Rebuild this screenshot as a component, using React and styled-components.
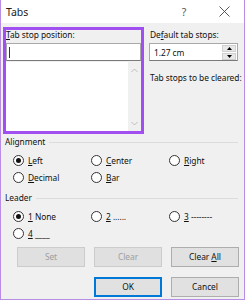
import React from 'react';
import styled, { createGlobalStyle } from 'styled-components';

const GlobalStyle = createGlobalStyle`
  html, body {
    margin: 0;
    padding: 0;
    background: #ffffff;
  }
  * {
    box-sizing: border-box;
  }
`;

const Tabs = () => {
  return (
    <>
      <GlobalStyle />
      <Window>
        <TitleBar>
          <Title>Tabs</Title>
          <TitleButtons>
            <Help>?</Help>
            <CloseIcon width="11" height="11" viewBox="0 0 11 11">
              <path d="M0.5 0.5 L10.5 10.5 M10.5 0.5 L0.5 10.5" stroke="#444" strokeWidth="0.9" />
            </CloseIcon>
          </TitleButtons>
        </TitleBar>

        <Body>
          <TopRow>
            <Highlight>
              <FieldLabel>
                <u>T</u>ab stop position:
              </FieldLabel>
              <TextBox>
                <Caret />
              </TextBox>
              <ListBox>
                <ListScroll>
                  <svg width="7" height="5" viewBox="0 0 7 5">
                    <path d="M0.5 4 L3.5 1 L6.5 4" fill="none" stroke="#bdbdbd" strokeWidth="1" />
                  </svg>
                  <svg width="7" height="5" viewBox="0 0 7 5">
                    <path d="M0.5 1 L3.5 4 L6.5 1" fill="none" stroke="#bdbdbd" strokeWidth="1" />
                  </svg>
                </ListScroll>
              </ListBox>
            </Highlight>

            <RightColumn>
              <FieldLabel>
                De<u>f</u>ault tab stops:
              </FieldLabel>
              <TextBox>
                <Value>1.27 cm</Value>
                <Spinner>
                  <SpinButton>
                    <svg width="5" height="3" viewBox="0 0 5 3">
                      <path d="M0 3 L2.5 0 L5 3 Z" fill="#000" />
                    </svg>
                  </SpinButton>
                  <SpinButton>
                    <svg width="5" height="3" viewBox="0 0 5 3">
                      <path d="M0 0 L2.5 3 L5 0 Z" fill="#000" />
                    </svg>
                  </SpinButton>
                </Spinner>
              </TextBox>
              <ClearedLabel>Tab stops to be cleared:</ClearedLabel>
            </RightColumn>
          </TopRow>

          <GroupLabel>
            <span>Alignment</span>
          </GroupLabel>
          <RadioGrid>
            <Radio>
              <Circle $checked />
              <span><u>L</u>eft</span>
            </Radio>
            <Radio>
              <Circle />
              <span><u>C</u>enter</span>
            </Radio>
            <Radio>
              <Circle />
              <span><u>R</u>ight</span>
            </Radio>
            <Radio>
              <Circle />
              <span><u>D</u>ecimal</span>
            </Radio>
            <Radio>
              <Circle />
              <span><u>B</u>ar</span>
            </Radio>
          </RadioGrid>

          <GroupLabel $top="6px">
            <span>Leader</span>
          </GroupLabel>
          <RadioGrid>
            <Radio>
              <Circle $checked />
              <span><u>1</u> None</span>
            </Radio>
            <Radio>
              <Circle />
              <span><u>2</u> ......</span>
            </Radio>
            <Radio>
              <Circle />
              <span><u>3</u> --------</span>
            </Radio>
            <Radio>
              <Circle />
              <span><u>4</u> ____</span>
            </Radio>
          </RadioGrid>

          <ButtonRow $top="5px">
            <Button $disabled>Set</Button>
            <Button $disabled>Clear</Button>
            <Button>
              Clear <u>A</u>ll
            </Button>
          </ButtonRow>
          <ButtonRow $top="10px">
            <Button $default>OK</Button>
            <Button>Cancel</Button>
          </ButtonRow>
        </Body>
      </Window>
    </>
  );
};

export default Tabs;

const Window = styled.div`
  width: 245px;
  height: 300px;
  display: flex;
  flex-direction: column;
  border: 1px solid #b88de6;
  border-top: none;
  background: #f0f0f0;
  font-family: 'Noto Sans', 'Open Sans', sans-serif;
  font-size: 8.4px;
  letter-spacing: -0.05px;
  color: #111;
  overflow: hidden;
`;

const TitleBar = styled.div`
  height: 23px;
  display: flex;
  align-items: center;
  justify-content: space-between;
  padding: 0 0 0 5px;
  background: #ffffff;
`;

const Title = styled.div`
  font-size: 10.5px;
  color: #222;
`;

const TitleButtons = styled.div`
  display: flex;
  align-items: center;
`;

const Help = styled.div`
  width: 40px;
  text-align: center;
  font-size: 10.5px;
  color: #555;
`;

const CloseIcon = styled.svg`
  margin: 0 14px 0 15px;
`;

const Body = styled.div`
  flex: 1;
  display: flex;
  flex-direction: column;
  padding: 4px 0 0 2px;
`;

const TopRow = styled.div`
  display: flex;
  gap: 5px;
`;

const Highlight = styled.div`
  width: 141px;
  height: 107px;
  border: 3px solid #a24ff2;
  display: flex;
  flex-direction: column;
`;

const FieldLabel = styled.div`
  line-height: 10px;
  height: 13px;
  white-space: nowrap;
`;

const TextBox = styled.div`
  height: 18px;
  display: flex;
  align-items: center;
  background: #ffffff;
  border: 1px solid #a9a9a9;
  border-bottom-color: #7a7a7a;
  padding-left: 2px;
`;

const Caret = styled.div`
  width: 1px;
  height: 11px;
  background: #333;
`;

const Value = styled.span`
  flex: 1;
  padding-left: 2px;
`;

const Spinner = styled.div`
  width: 14px;
  height: 15px;
  margin-right: 1px;
  display: flex;
  flex-direction: column;
  gap: 1px;
`;

const SpinButton = styled.div`
  flex: 1;
  display: flex;
  align-items: center;
  justify-content: center;
  background: #e8e8e8;
  border: 1px solid #d0d0d0;
`;

const ListBox = styled.div`
  flex: 1;
  display: flex;
  justify-content: flex-end;
  background: #ffffff;
  margin-top: 1px;
`;

const ListScroll = styled.div`
  width: 13px;
  display: flex;
  flex-direction: column;
  justify-content: space-between;
  align-items: center;
  padding: 6px 0 5px;
  background: #f0f0f0;
`;

const RightColumn = styled.div`
  width: 89px;
  display: flex;
  flex-direction: column;
  padding-top: 3px;

  & > ${FieldLabel} {
    padding-left: 1px;
  }
`;

const ClearedLabel = styled.div`
  margin-top: 11px;
  padding-left: 1px;
  white-space: nowrap;
`;

const GroupLabel = styled.div`
  display: flex;
  align-items: center;
  gap: 4px;
  margin-top: ${(p) => p.$top || '2px'};
  padding-left: 2px;
  padding-right: 6px;
  line-height: 12px;

  &::after {
    content: '';
    flex: 1;
    height: 1px;
    background: #dcdcdc;
  }
`;

const RadioGrid = styled.div`
  display: grid;
  grid-template-columns: 78px 78px 1fr;
  grid-auto-rows: 17px;
  padding-left: 10px;
  margin-top: 4px;
`;

const Radio = styled.div`
  display: flex;
  align-items: center;
  gap: 4px;
  white-space: nowrap;
`;

const Circle = styled.span`
  width: 11px;
  height: 11px;
  border-radius: 50%;
  border: 1px solid #333;
  background: #ffffff;
  display: flex;
  align-items: center;
  justify-content: center;

  &::after {
    content: '';
    width: 5px;
    height: 5px;
    border-radius: 50%;
    background: ${(p) => (p.$checked ? '#111' : 'transparent')};
  }
`;

const ButtonRow = styled.div`
  display: flex;
  justify-content: flex-end;
  gap: 9px;
  padding-right: 5px;
  margin-top: ${(p) => p.$top};
`;

const Button = styled.div`
  width: 68px;
  height: 20px;
  line-height: 18px;
  text-align: center;
  white-space: nowrap;
  background: ${(p) => (p.$disabled ? '#e0e0e0' : '#e1e1e1')};
  border: 1px solid
    ${(p) => (p.$default ? '#0078d7' : p.$disabled ? '#cccccc' : '#adadad')};
  box-shadow: ${(p) => (p.$default ? 'inset 0 0 0 1px #0078d7' : 'none')};
  color: ${(p) => (p.$disabled ? '#9e9e9e' : '#111')};
`;
